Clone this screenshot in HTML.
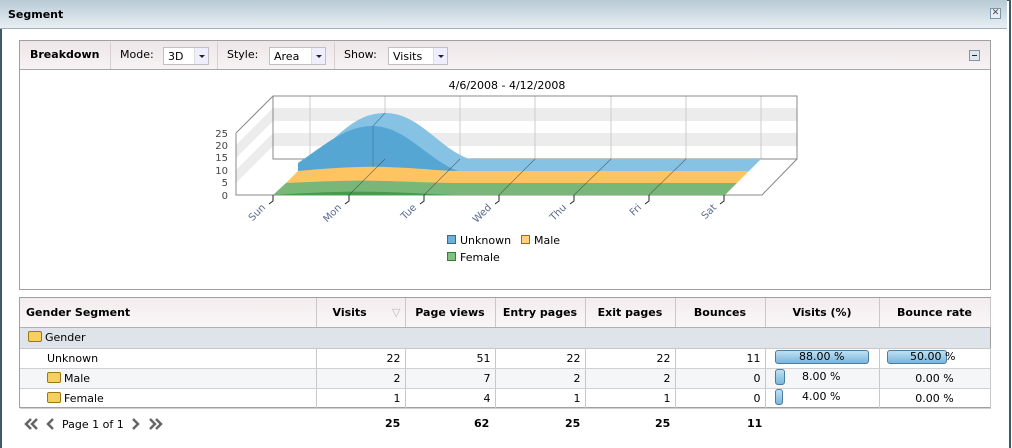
<!DOCTYPE html>
<html><head><meta charset="utf-8"><style>
*{margin:0;padding:0;box-sizing:border-box}
body{width:1012px;height:448px;background:#fff;font-family:"DejaVu Sans","Liberation Sans",sans-serif;font-size:11px;color:#000;position:relative;overflow:hidden}
.win{position:absolute;left:0;top:0;width:1011px;height:448px;border:2px solid #3d5a6c;border-top:1px solid #3d5a6c;border-bottom:none}
.title{position:absolute;left:0;top:0;width:1007px;height:29px;background:linear-gradient(#b8cad6,#e8eff3);border-bottom:1px solid #9fb1bd;font-weight:bold;font-size:11px;padding:8px 0 0 8px}
.x{position:absolute;right:6px;top:8px;width:11px;height:11px;border:1px solid #7f96a8;background:#e8eef3;font-size:9px;line-height:9px;text-align:center;color:#445}
.panel{position:absolute;left:19px;top:40px;width:972px;height:250px;border:1px solid #a0a0a0}
.tb{position:absolute;left:0;top:0;width:970px;height:29px;background:linear-gradient(#ede6e8,#f7f2f3);border-bottom:1px solid #a8a8a8}
.tb span{position:absolute;top:7px}
.sep{position:absolute;top:1px;width:1px;height:27px;background:#d8d0d2}
.dd{position:absolute;top:6px;height:18px;border:1px solid #c0c0c0;background:#fff;padding:2px 4px;font-size:11px}
.dd i{position:absolute;right:0;top:0;width:14px;height:16px;background:#eef;border-left:1px solid #ddd}
.dd i:after{content:"";position:absolute;left:4px;top:7px;border:3px solid transparent;border-top:3px solid #222}
.min{position:absolute;right:10px;top:9px;width:11px;height:11px;border:1px solid #7f96a8;background:#dfe7ee}
.min:after{content:"";position:absolute;left:2px;top:4px;width:5px;height:1px;background:#223}
.grid{position:absolute;left:19px;top:297px;width:972px;height:111px;border:1px solid #a0a0a0}
table{border-collapse:collapse;width:970px;table-layout:fixed}
td,th{height:20px;border-right:1px solid #c8c8c8;padding:0 4px;font-size:11px;white-space:nowrap}
th{height:29px;background:linear-gradient(#f3ecee,#faf6f7);border-bottom:1px solid #b0b0b0;font-weight:bold}
tr.r td{border-bottom:1px solid #d0d0d0;text-align:right}
tr.g td{height:21px;background:#dfe3ea;border-bottom:1px solid #c8c8c8;border-right:none}
tr.alt td{background:#f5f6f8}
.fold{display:inline-block;width:14px;height:11px;background:#f5d060;border:1px solid #9a7a10;border-radius:2px;vertical-align:-1px;margin-right:3px}
.bar{position:absolute;height:14px;border:1px solid #4a7ca0;border-radius:3px;background:linear-gradient(#bfe0f4,#7ab6dc)}
.foot{position:absolute;top:417px;font-weight:bold}
</style></head><body>
<div class="win"></div>
<div class="title">Segment<div class="x">✕</div></div>
<div class="panel">
 <div class="tb">
  <span style="left:10px;font-weight:bold">Breakdown</span>
  <div class="sep" style="left:90px"></div>
  <span style="left:100px">Mode:</span>
  <div class="dd" style="left:143px;width:46px">3D<i></i></div>
  <div class="sep" style="left:197px"></div>
  <span style="left:207px">Style:</span>
  <div class="dd" style="left:249px;width:57px">Area<i></i></div>
  <div class="sep" style="left:314px"></div>
  <span style="left:324px">Show:</span>
  <div class="dd" style="left:368px;width:60px">Visits<i></i></div>
  <div class="min"></div>
 </div>
</div>
<svg style="position:absolute;left:0;top:0" width="1012" height="290">
 <text x="507" y="89" font-size="11" text-anchor="middle" font-family="DejaVu Sans,sans-serif">4/6/2008 - 4/12/2008</text>
 <rect x="273" y="108" width="524" height="13" fill="#ececec"/>
 <rect x="273" y="133" width="524" height="13" fill="#ececec"/>
 <polygon points="236,183 273,146 273,133 236,170" fill="#ececec"/>
 <polygon points="236,158 273,121 273,108 236,145" fill="#ececec"/>
 <g stroke="#ccc" stroke-width="1">
  <line x1="310" y1="96" x2="310" y2="159"/><line x1="385" y1="96" x2="385" y2="159"/><line x1="460" y1="96" x2="460" y2="159"/><line x1="535" y1="96" x2="535" y2="159"/><line x1="611" y1="96" x2="611" y2="159"/><line x1="686" y1="96" x2="686" y2="159"/><line x1="761" y1="96" x2="761" y2="159"/>
 </g>
 <polyline points="236,133 273,96 797,96 797,159 762,195 236,195 236,133" fill="none" stroke="#888"/>
 <polyline points="273,96 273,159 797,159" fill="none" stroke="#888"/>
 <!-- blue top surface (back) -->
 <path d="M310,159 C340,135 355,113 385,113 C420,113 440,150 470,159 L761,159 L749,171 L298,171 L298,163 Z" fill="#86c2e4"/>
 <!-- blue front face -->
 <path d="M298,163 C325,145 345,126 373,126 C405,126 428,160 458,171 L298,171 Z" fill="#56a6d4"/>
 <line x1="373" y1="126" x2="373" y2="171" stroke="#3a7aa0" stroke-width=".7"/>
 <line x1="373" y1="126" x2="385" y2="113" stroke="#3a7aa0" stroke-width=".7"/>
 <path d="M286,183 L298,171 C330,168 360,166 385,167 C420,168 440,171 460,171 L749,171 L737,183 Z" fill="#ffc462"/>
 <path d="M273,195 L286,183 C330,181 360,180 385,181 C420,182 440,183 460,183 L737,183 L725,195 Z" fill="#79b779"/>
 <path d="M273,195 C320,192 350,191 385,192 C420,193 440,195 460,195 Z" fill="#4a9a4a"/>
 <g stroke="#333" stroke-width="0.7" opacity=".6">
  <line x1="349" y1="195" x2="385" y2="159"/><line x1="424" y1="195" x2="460" y2="159"/><line x1="499" y1="195" x2="535" y2="159"/><line x1="574" y1="195" x2="611" y2="159"/><line x1="649" y1="195" x2="686" y2="159"/>
 </g>
 <g font-size="10" fill="#444" text-anchor="end" font-family="DejaVu Sans,sans-serif">
  <text x="228" y="199">0</text><text x="228" y="186">5</text><text x="228" y="174">10</text><text x="228" y="161">15</text><text x="228" y="149">20</text><text x="228" y="137">25</text>
 </g>
 <g stroke="#222">
  <path d="M273,195v6l-4,3M349,195v6l-4,3M424,195v6l-4,3M499,195v6l-4,3M574,195v6l-4,3M649,195v6l-4,3M724,195v6l-4,3" fill="none"/>
 </g>
 <g font-size="10" fill="#5a6a90" text-anchor="end" font-family="DejaVu Sans,sans-serif">
  <text transform="translate(266,208) rotate(-45)">Sun</text>
  <text transform="translate(342,208) rotate(-45)">Mon</text>
  <text transform="translate(417,208) rotate(-45)">Tue</text>
  <text transform="translate(492,208) rotate(-45)">Wed</text>
  <text transform="translate(567,208) rotate(-45)">Thu</text>
  <text transform="translate(642,208) rotate(-45)">Fri</text>
  <text transform="translate(717,208) rotate(-45)">Sat</text>
 </g>
 <rect x="447.5" y="235.5" width="8" height="8" fill="#6eb0dc" stroke="#3a6a90"/>
 <text x="460" y="244" font-size="11" font-family="DejaVu Sans,sans-serif">Unknown</text>
 <rect x="521.5" y="235.5" width="8" height="8" fill="#ffd080" stroke="#a06a10"/>
 <text x="534" y="244" font-size="11" font-family="DejaVu Sans,sans-serif">Male</text>
 <rect x="447.5" y="252.5" width="8" height="8" fill="#80c080" stroke="#3a7a3a"/>
 <text x="460" y="261" font-size="11" font-family="DejaVu Sans,sans-serif">Female</text>
</svg>
<div class="grid">
<table>
<colgroup><col style="width:296px"><col style="width:89px"><col style="width:90px"><col style="width:90px"><col style="width:90px"><col style="width:90px"><col style="width:114px"><col style="width:111px"></colgroup>
<tr><th style="text-align:left;padding-left:6px">Gender Segment</th><th style="text-align:left;padding-left:16px;position:relative">Visits<span style="position:absolute;right:4px;top:8px;color:#bbb;font-weight:normal">▽</span></th><th>Page views</th><th>Entry pages</th><th>Exit pages</th><th>Bounces</th><th>Visits (%)</th><th>Bounce rate</th></tr>
<tr class="g"><td colspan="8" style="padding-left:8px;text-align:left"><span class="fold"></span>Gender</td></tr>
<tr class="r"><td style="text-align:left;padding-left:27px">Unknown</td><td>22</td><td>51</td><td>22</td><td>22</td><td>11</td><td></td><td></td></tr>
<tr class="r alt"><td style="text-align:left;padding-left:27px"><span class="fold"></span>Male</td><td>2</td><td>7</td><td>2</td><td>2</td><td>0</td><td></td><td style="text-align:center">0.00 %</td></tr>
<tr class="r"><td style="text-align:left;padding-left:27px"><span class="fold"></span>Female</td><td>1</td><td>4</td><td>1</td><td>1</td><td>0</td><td></td><td style="text-align:center">0.00 %</td></tr>
</table>
</div>
<div class="bar" style="left:775px;top:350px;width:94px"></div>
<span style="position:absolute;left:799px;top:350px">88.00 %</span>
<div class="bar" style="left:887px;top:350px;width:60px"></div>
<span style="position:absolute;left:910px;top:350px">50.00 %</span>
<div class="bar" style="left:775px;top:369px;width:10px;height:16px"></div>
<span style="position:absolute;left:802px;top:370px">8.00 %</span>
<div class="bar" style="left:775px;top:389px;width:8px;height:16px"></div>
<span style="position:absolute;left:802px;top:390px">4.00 %</span>
<svg style="position:absolute;left:24px;top:417px" width="145" height="14">
 <g fill="none" stroke="#666" stroke-width="2.5">
  <path d="M7,2l-5,5l5,5M13,2l-5,5l5,5"/>
  <path d="M29,2l-5,5l5,5"/>
  <path d="M109,2l5,5l-5,5"/>
  <path d="M126,2l5,5l-5,5M132,2l5,5l-5,5"/>
 </g>
</svg>
<span style="position:absolute;left:62px;top:418px">Page 1 of 1</span>
<span class="foot" style="left:385px">25</span>
<span class="foot" style="left:474px">62</span>
<span class="foot" style="left:565px">25</span>
<span class="foot" style="left:655px">25</span>
<span class="foot" style="left:747px">11</span>
</body></html>
